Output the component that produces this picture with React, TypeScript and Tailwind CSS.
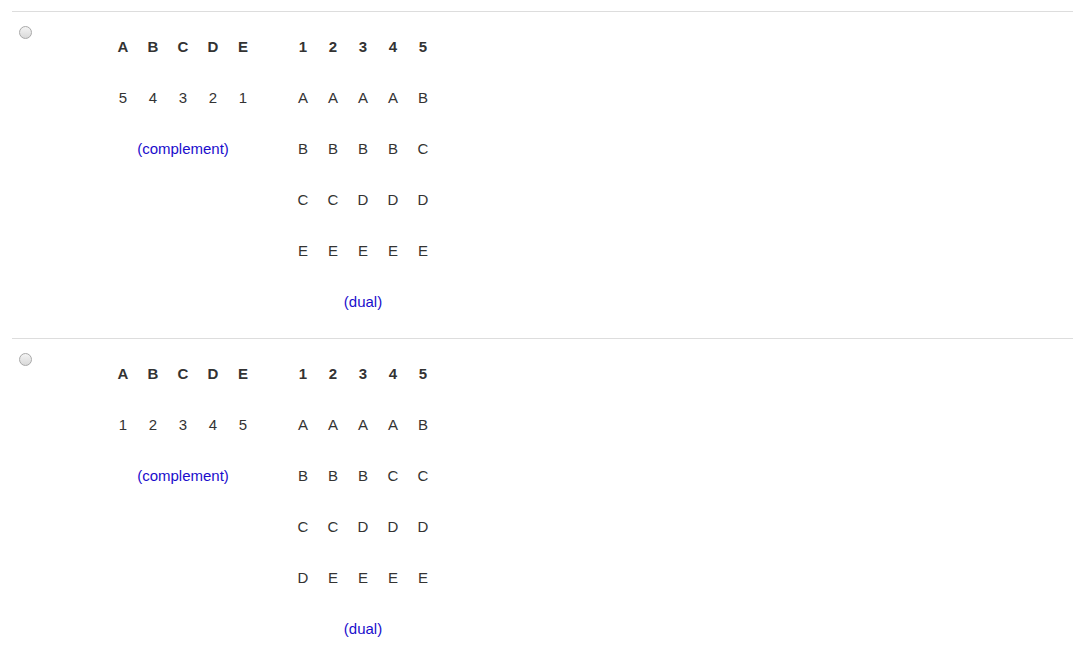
import React from 'react'

type Option = {
  id: number
  pref: string[]
  dual: string[][]
}

const options: Option[] = [
  {
    id: 1,
    pref: ['5', '4', '3', '2', '1'],
    dual: [
      ['A', 'A', 'A', 'A', 'B'],
      ['B', 'B', 'B', 'B', 'C'],
      ['C', 'C', 'D', 'D', 'D'],
      ['E', 'E', 'E', 'E', 'E'],
    ],
  },
  {
    id: 2,
    pref: ['1', '2', '3', '4', '5'],
    dual: [
      ['A', 'A', 'A', 'A', 'B'],
      ['B', 'B', 'B', 'C', 'C'],
      ['C', 'C', 'D', 'D', 'D'],
      ['D', 'E', 'E', 'E', 'E'],
    ],
  },
]

const letters = ['A', 'B', 'C', 'D', 'E']
const numbers = ['1', '2', '3', '4', '5']

const Cell = ({ children, bold }: { children: React.ReactNode; bold?: boolean }) => (
  <div className={`w-[30px] h-[51px] flex items-center justify-center ${bold ? 'font-bold' : ''}`}>
    {children}
  </div>
)

const Row = ({ items, bold }: { items: string[]; bold?: boolean }) => (
  <div className="flex">
    {items.map((v, i) => (
      <Cell key={i} bold={bold}>
        {v}
      </Cell>
    ))}
  </div>
)

const Caption = ({ text }: { text: string }) => (
  <div className="w-[150px] h-[51px] flex items-center justify-center text-[#1a0dcc]">{text}</div>
)

export default function App() {
  return (
    <div
      className="min-h-screen bg-white pt-[11px] pl-[12px] pr-[13px] text-[15px] text-[#333]"
      style={{ fontFamily: '"Liberation Sans", Arial, sans-serif' }}
    >
      {options.map((opt) => (
        <div key={opt.id} className="border-t border-[#ddd] flex pt-[10px] pb-[10px]">
          <div className="w-[96px] pl-[7px] pt-[4px]">
            <div className="w-[13px] h-[13px] rounded-full border border-[#a9a9a9] bg-gradient-to-b from-[#f4f4f4] to-[#d9d9d9]" />
          </div>
          <div className="flex gap-[30px]">
            <div className="flex flex-col">
              <Row items={letters} bold />
              <Row items={opt.pref} />
              <Caption text="(complement)" />
            </div>
            <div className="flex flex-col">
              <Row items={numbers} bold />
              {opt.dual.map((r, i) => (
                <Row key={i} items={r} />
              ))}
              <Caption text="(dual)" />
            </div>
          </div>
        </div>
      ))}
    </div>
  )
}
